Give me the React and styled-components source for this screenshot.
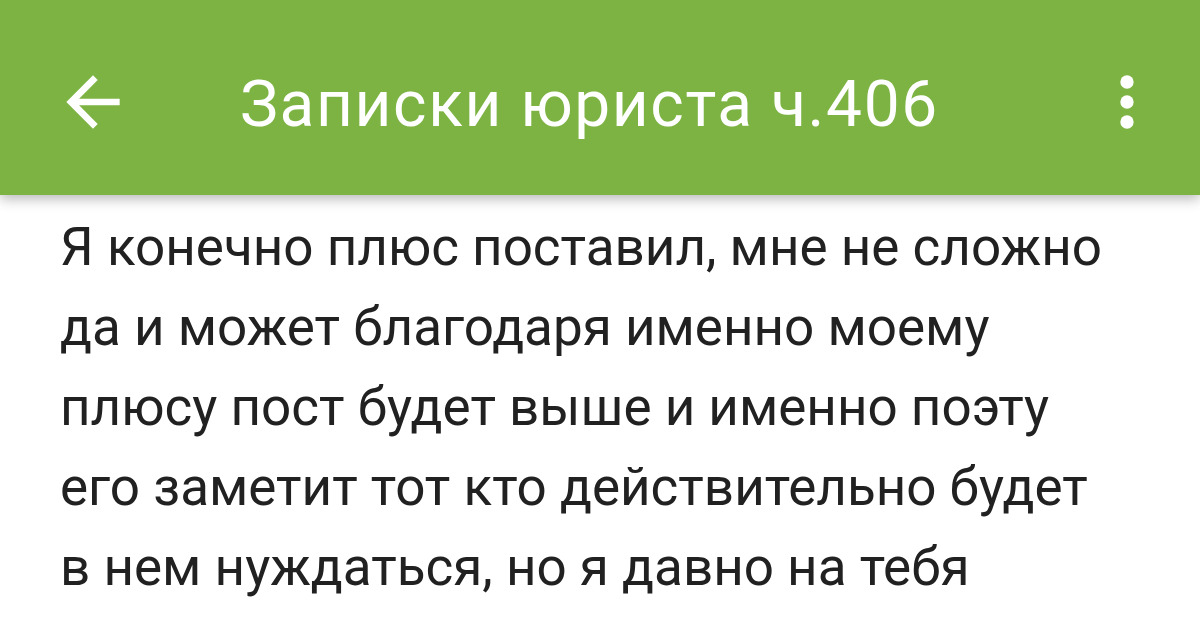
import React from 'react';
import styled, { createGlobalStyle } from 'styled-components';

const GlobalStyle = createGlobalStyle`
  html, body {
    margin: 0;
    padding: 0;
    background: #ffffff;
  }
  body {
    font-family: Roboto, "Noto Sans", sans-serif;
  }
`;

const Screen = styled.div`
  width: 1200px;
  height: 628px;
  overflow: hidden;
  display: flex;
  flex-direction: column;
  background: #ffffff;
`;

const Toolbar = styled.header`
  position: relative;
  z-index: 1;
  flex: 0 0 195px;
  display: flex;
  align-items: center;
  padding: 0 33px 0 53px;
  background: #7cb342;
  box-shadow: 0 4px 12px rgba(0, 0, 0, 0.28);
`;

const IconButton = styled.div`
  width: 80px;
  height: 80px;
  display: flex;
  align-items: center;
  justify-content: center;
  margin-top: 9px;
`;

const Title = styled.h1`
  flex: 1;
  margin: 14px 0 0 107px;
  font-family: Roboto, sans-serif;
  font-weight: 400;
  font-size: 64px;
  letter-spacing: 1.6px;
  color: #ffffff;
  white-space: nowrap;
  line-height: 1;
`;

const Content = styled.main`
  padding: 12px 60px 0;
`;

const Paragraph = styled.p`
  margin: 0;
  font-family: Roboto, sans-serif;
  font-size: 53px;
  line-height: 80px;
  color: #212121;
  white-space: nowrap;
`;

const BackIcon = () => (
  <svg width="80" height="80" viewBox="0 0 24 24" fill="#ffffff">
    <path d="M20 11H7.83l5.59-5.59L12 4l-8 8 8 8 1.41-1.41L7.83 13H20v-2z" />
  </svg>
);

const MoreIcon = () => (
  <svg width="80" height="80" viewBox="0 0 24 24" fill="#ffffff">
    <circle cx="12" cy="6" r="2" />
    <circle cx="12" cy="12" r="2" />
    <circle cx="12" cy="18" r="2" />
  </svg>
);

const lines = [
  'Я конечно плюс поставил, мне не сложно',
  'да и может благодаря именно моему',
  'плюсу пост будет выше и именно поэту',
  'его заметит тот кто действительно будет',
  'в нем нуждаться, но я давно на тебя',
];

export default function App() {
  return (
    <>
      <GlobalStyle />
      <Screen>
        <Toolbar>
          <IconButton>
            <BackIcon />
          </IconButton>
          <Title>Записки юриста ч.406</Title>
          <IconButton>
            <MoreIcon />
          </IconButton>
        </Toolbar>
        <Content>
          {lines.map(line => (
            <Paragraph key={line}>{line}</Paragraph>
          ))}
        </Content>
      </Screen>
    </>
  );
}
